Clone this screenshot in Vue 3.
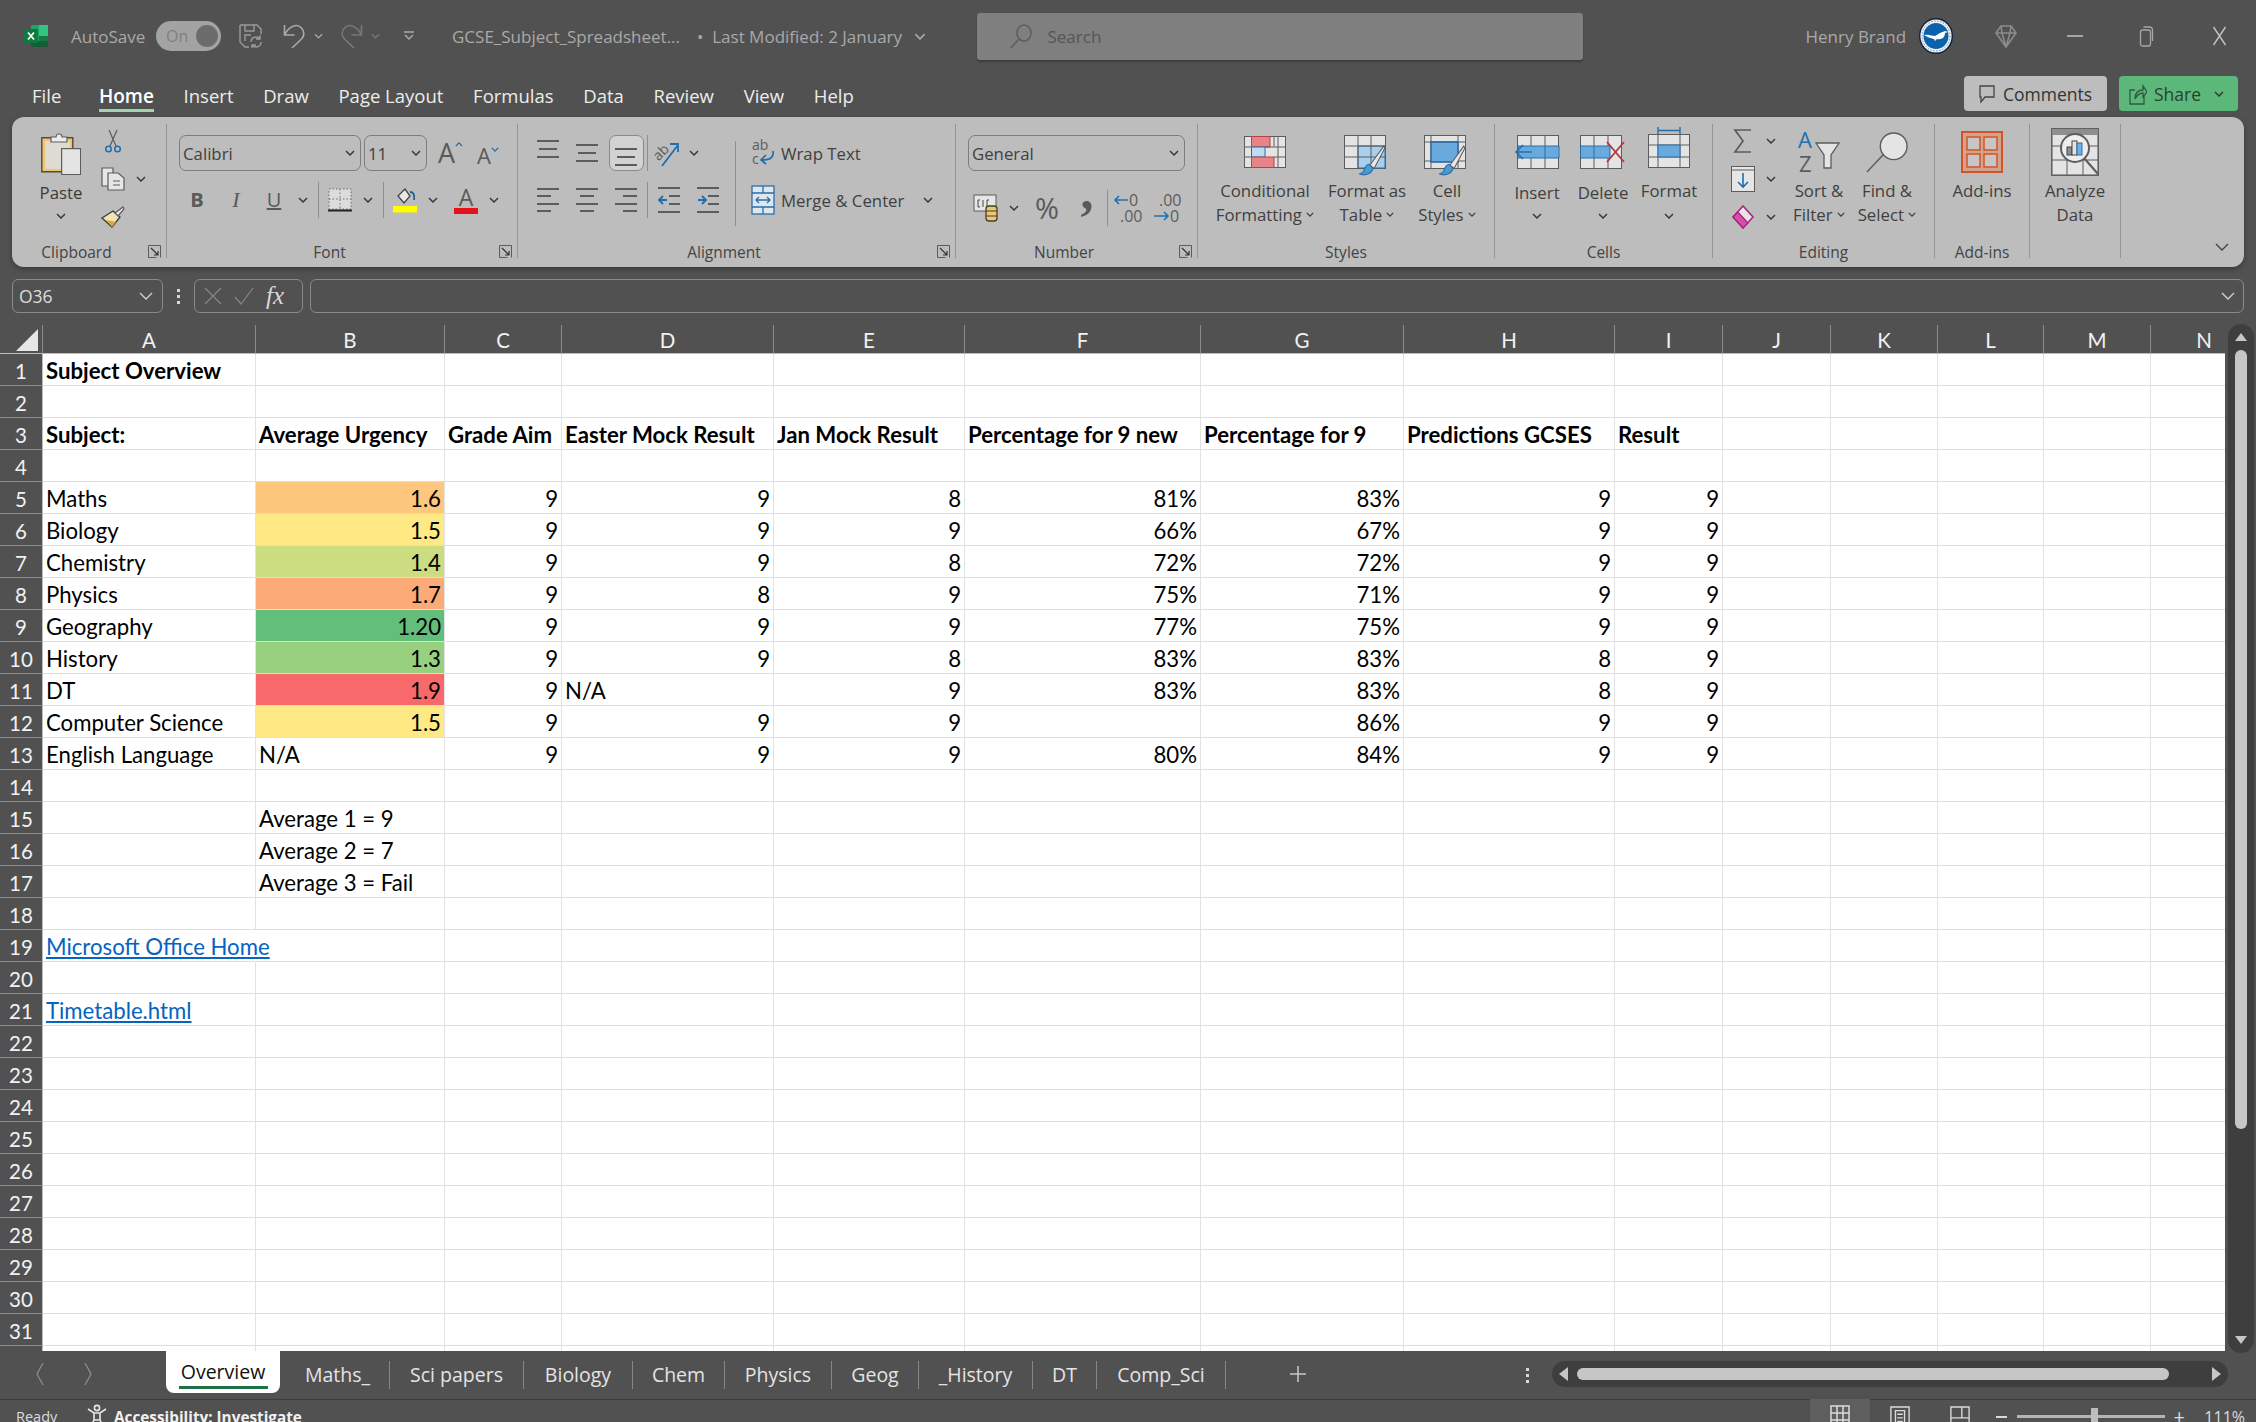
<script setup>
import { computed } from 'vue'

const columns = ['A', 'B', 'C', 'D', 'E', 'F', 'G', 'H', 'I', 'J', 'K', 'L', 'M', 'N']
const menuItems = ['File', 'Home', 'Insert', 'Draw', 'Page Layout', 'Formulas', 'Data', 'Review', 'View', 'Help']
const sheetTabs = ['Maths_', 'Sci papers', 'Biology', 'Chem', 'Physics', 'Geog', '_History', 'DT', 'Comp_Sci']

// colour scale values from the Average Urgency column
const urgencyColors = {
  '1.6': '#fdc77d',
  '1.5': '#ffe984',
  '1.4': '#cbdc81',
  '1.7': '#fcaa78',
  '1.20': '#63be7b',
  '1.3': '#98d07f',
  '1.9': '#f8696b',
}

const content = {
  1: ['Subject Overview'],
  3: ['Subject:', 'Average Urgency', 'Grade Aim', 'Easter Mock Result', 'Jan Mock Result', 'Percentage for 9 new', 'Percentage for 9', 'Predictions GCSES', 'Result'],
  5: ['Maths', '1.6', '9', '9', '8', '81%', '83%', '9', '9'],
  6: ['Biology', '1.5', '9', '9', '9', '66%', '67%', '9', '9'],
  7: ['Chemistry', '1.4', '9', '9', '8', '72%', '72%', '9', '9'],
  8: ['Physics', '1.7', '9', '8', '9', '75%', '71%', '9', '9'],
  9: ['Geography', '1.20', '9', '9', '9', '77%', '75%', '9', '9'],
  10: ['History', '1.3', '9', '9', '8', '83%', '83%', '8', '9'],
  11: ['DT', '1.9', '9', 'N/A', '9', '83%', '83%', '8', '9'],
  12: ['Computer Science', '1.5', '9', '9', '9', '', '86%', '9', '9'],
  13: ['English Language', 'N/A', '9', '9', '9', '80%', '84%', '9', '9'],
  15: ['', 'Average 1 = 9'],
  16: ['', 'Average 2 = 7'],
  17: ['', 'Average 3 = Fail'],
  19: ['Microsoft Office Home'],
  21: ['Timetable.html'],
}

const boldRows = [1, 3]
const linkRows = [19, 21]

const cells = computed(() => {
  const list = [{ key: 'corner', cls: 'head corner', text: '' }]
  columns.forEach((c) => list.push({ key: c, cls: 'head col-head', text: c }))
  for (let r = 1; r <= 32; r++) {
    list.push({ key: 'r' + r, cls: 'head row-head', text: String(r) })
    const values = content[r] || []
    columns.forEach((c, i) => {
      const text = values[i] || ''
      const isNum = /^[\d.]+%?$/.test(text)
      const cls = ['cell']
      if (isNum) cls.push('num')
      if (boldRows.includes(r)) cls.push('bold')
      if (linkRows.includes(r)) cls.push('link')
      if (r === 19 && i === 0) cls.push('spill')
      list.push({
        key: c + r,
        cls: cls.join(' '),
        text,
        bg: i === 1 ? urgencyColors[text] : null,
      })
    })
  }
  return list
})
</script>

<template>
  <div class="app">
    <svg class="defs" width="0" height="0">
      <symbol id="chev" viewBox="0 0 10 6"><path d="M1 1l4 4 4-4" fill="none" stroke="currentColor" stroke-width="1.5" /></symbol>
      <symbol id="launch" viewBox="0 0 13 13">
        <path d="M.5 .5h12v12M.5 .5v12h8" fill="none" stroke="#5c5c5c" />
        <path d="M3 3l7 7M10 6v4H6" fill="none" stroke="#333" stroke-width="1.2" />
      </symbol>
      <symbol id="brush" viewBox="0 0 26 30">
        <path d="M24 1L11 19l4 3L25 3z" fill="#e8e8e8" stroke="#5c5c5c" />
        <path d="M10 18c-4 1-4 5-5 7-1 1-3 2-4 2 4 2 11 1 13-5z" fill="#4a9bd4" stroke="#2a6ea8" />
      </symbol>
    </svg>

    <!-- title bar -->
    <header class="titlebar">
      <svg class="logo" viewBox="0 0 24 24">
        <rect x="7" y="1" width="17" height="22" rx="1.5" fill="#21a366" />
        <rect x="15" y="1" width="9" height="11" fill="#33c481" />
        <rect x="15" y="12" width="9" height="11" fill="#107c41" />
        <rect x="7" y="17" width="17" height="6" fill="#185c37" />
        <rect y="5" width="14" height="14" rx="1.5" fill="#0d7a3e" />
        <path d="M4 8.5l6 7M10 8.5l-6 7" stroke="#fff" stroke-width="1.7" />
      </svg>
      <span class="autosave">AutoSave</span>
      <span class="toggle"><span>On</span><i></i></span>
      <svg class="ti save" viewBox="0 0 23 24" fill="none" stroke="#9a9a9a" stroke-width="1.4">
        <path d="M1 1h17l4 4v5M1 1v17l5 5h4M6 1v6h9V1M6 17v-6h6" />
        <path d="M12 18a5 5 0 0 1 9-3M22 18a5 5 0 0 1-9 3M21 11v4h-4M13 25v-4h4" />
      </svg>
      <svg class="ti undo" viewBox="0 0 22 24" fill="none" stroke="#a9a9a9" stroke-width="1.6">
        <path d="M1.5 1v10h10M1.5 11C6 2 14-1 18.5 4c3.5 4 2.5 8 0 11L9 24" />
      </svg>
      <svg class="ti-chev c1"><use href="#chev" /></svg>
      <svg class="ti redo" viewBox="0 0 22 24" fill="none" stroke="#777" stroke-width="1.6">
        <path d="M20.5 1v10h-10M20.5 11C16 2 8-1 3.5 4c-3.5 4-2.5 8 0 11L13 24" />
      </svg>
      <svg class="ti-chev c2"><use href="#chev" /></svg>
      <svg class="ti qat" viewBox="0 0 10 10" fill="none" stroke="#a9a9a9" stroke-width="1.5">
        <path d="M0 1h10M1 4l4 4 4-4" />
      </svg>
      <span class="filename">GCSE_Subject_Spreadsheet...</span>
      <span class="modified">•&nbsp; Last Modified: 2 January</span>
      <svg class="ti-chev c3"><use href="#chev" /></svg>
      <div class="search">
        <svg class="search-icon" viewBox="0 0 24 24" fill="none" stroke="#5e5e5e" stroke-width="1.6">
          <ellipse cx="15" cy="9" rx="7" ry="8" />
          <path d="M10 15L2 24" />
        </svg>
        <span>Search</span>
      </div>
      <span class="user">Henry Brand</span>
      <svg class="avatar" viewBox="0 0 34 36">
        <ellipse cx="17" cy="18" rx="17" ry="18" fill="#0d2440" />
        <ellipse cx="17" cy="18" rx="15.6" ry="16.6" fill="#f4f4f4" />
        <ellipse cx="17" cy="18" rx="14" ry="15" fill="none" stroke="#5a86b5" stroke-dasharray="1.5 1.5" />
        <ellipse cx="17" cy="18" rx="12.5" ry="13" fill="#0a62ad" />
        <path d="M5 17c5-1 8 1 11 1l5-3 5-2 3 1-3 1c0 4-3 7-8 6l-2 2-1-2c-4-1-7-2-10-4z" fill="#fff" />
      </svg>
      <svg class="ti diamond" viewBox="0 0 22 23" fill="none" stroke="#8c8c8c" stroke-width="1.6">
        <path d="M6 1h10l5 7-10 14L1 8zM1 8h20M7 8l4 14 4-14M6 1l1 7M16 1l-1 7" />
      </svg>
      <span class="win-min"></span>
      <svg class="ti win-restore" viewBox="0 0 14 22" fill="none" stroke="#a6a6a6" stroke-width="1.3">
        <rect x="1" y="5" width="10" height="16" rx="2" /><path d="M4 2h6a3 3 0 0 1 3 3v11" />
      </svg>
      <svg class="ti win-close" viewBox="0 0 14 22" fill="none" stroke="#c2c2c2" stroke-width="1.4">
        <path d="M1 2l12 18M13 2L1 20" />
      </svg>
    </header>

    <!-- menu row -->
    <nav class="menubar">
      <span v-for="m in menuItems" :key="m" :class="['menu-item', { active: m === 'Home' }]">{{ m }}</span>
      <button class="comments">
        <svg viewBox="0 0 16 20" fill="none" stroke="#444" stroke-width="1.3"><path d="M1 2h14v11H6l-4 5V13H1z" /></svg>
        Comments
      </button>
      <button class="share">
        <svg viewBox="0 0 18 22" fill="none" stroke="#2f5a3c" stroke-width="1.3"><path d="M6 7H1v14h14V12M6 16c0-6 3-9 8-9V3l4 6-4 5v-4c-4 0-6 2-8 6z" /></svg>
        Share
        <svg class="share-chev"><use href="#chev" /></svg>
      </button>
    </nav>

    <!-- ribbon -->
    <section class="ribbon">
      <div class="group g-clip">
        <div class="body">
          <div class="paste">
            <svg class="paste-icon" viewBox="0 0 40 45">
              <path d="M.8 7.8h31v34H.8z" fill="#ecc671" stroke="#55493a" stroke-width="1.4" />
              <path d="M4 11h25v28H4z" fill="#dedbd2" />
              <path d="M10 12V7h5a3 3 0 0 1 6 0h5v5z" fill="#ececec" stroke="#5c5c5c" stroke-width="1.2" />
              <rect x="20.6" y="18.6" width="19" height="26" fill="#e4e4e4" stroke="#5c5c5c" stroke-width="1.2" />
            </svg>
            <span class="paste-label">Paste</span>
            <svg class="chev"><use href="#chev" /></svg>
          </div>
          <div class="small-col clip-col">
            <div class="small-row">
              <svg class="scissors" viewBox="0 0 16 24" fill="none">
                <path d="M5 17L12 1M11 17L4 1" stroke="#5c5c5c" stroke-width="1.2" />
                <circle cx="3.5" cy="20" r="2.8" stroke="#1f6fb0" stroke-width="1.5" />
                <circle cx="12.5" cy="20" r="2.8" stroke="#1f6fb0" stroke-width="1.5" />
              </svg>
            </div>
            <div class="small-row">
              <svg class="copy" viewBox="0 0 24 24" fill="#e6e6e6" stroke="#5c5c5c" stroke-width="1.2">
                <path d="M1 1h11v18H1z" />
                <path d="M7 6h10l6 5v12H7z" />
                <path d="M12 14h7M12 18h7" />
              </svg>
              <svg class="chev copy-chev"><use href="#chev" /></svg>
            </div>
            <div class="small-row">
              <svg class="format-painter" viewBox="0 0 24 22">
                <path d="M1 12L12 5l7 6-8 10z" fill="#f3e3b6" stroke="#3a3a3a" stroke-width="1.3" />
                <path d="M5 14l10 2-4 5z" fill="#d9a441" />
                <path d="M14 7l8-6 1 2-6 7z" fill="#e6e6e6" stroke="#5c5c5c" stroke-width="1.2" />
              </svg>
            </div>
          </div>
        </div>
        <div class="label"><span>Clipboard</span><svg class="launch"><use href="#launch" /></svg></div>
      </div>

      <div class="group g-font">
        <div class="body rows font-rows">
          <div class="row font-row1">
            <div class="combo font-combo"><span>Calibri</span><svg class="chev"><use href="#chev" /></svg></div>
            <div class="combo size-combo"><span>11</span><svg class="chev"><use href="#chev" /></svg></div>
            <span class="a-big">A<svg viewBox="0 0 10 6"><path d="M1 5l4-4 4 4" fill="none" stroke="#1f6fb0" stroke-width="1.6" /></svg></span>
            <span class="a-small">A<svg viewBox="0 0 10 6"><path d="M1 1l4 4 4-4" fill="none" stroke="#1f6fb0" stroke-width="1.6" /></svg></span>
          </div>
          <div class="row tool-grid font-row2">
            <b class="fmt fmt-b">B</b>
            <i class="fmt fmt-i">I</i>
            <u class="fmt fmt-u">U</u>
            <svg class="chev"><use href="#chev" /></svg>
            <span class="vsep"></span>
            <svg class="borders" viewBox="0 0 24 24" fill="none">
              <rect x="1" y="1" width="22" height="20" fill="#dcdcdc" />
              <path d="M1 1h22v20H1zM12 1v20M1 11h22" stroke="#6e6e6e" stroke-dasharray="1.5 2" />
              <path d="M0 22.5h24" stroke="#222" stroke-width="2" />
            </svg>
            <svg class="chev"><use href="#chev" /></svg>
            <span class="vsep"></span>
            <svg class="fill-color" viewBox="0 0 24 26">
              <path d="M5 9l7-7 5 7-6 7z" fill="#e8e8e8" stroke="#444" stroke-width="1.3" />
              <path d="M17 5c3 0 5 2 4 8" fill="none" stroke="#1f5f94" stroke-width="1.8" />
              <rect y="19" width="24" height="6.5" fill="#ffff00" />
            </svg>
            <svg class="chev"><use href="#chev" /></svg>
            <span class="font-color"><span>A</span><i></i></span>
            <svg class="chev"><use href="#chev" /></svg>
          </div>
        </div>
        <div class="label"><span>Font</span><svg class="launch"><use href="#launch" /></svg></div>
      </div>

      <div class="group g-align">
        <div class="body align-body">
          <div class="rows">
            <div class="row tool-grid align-row1">
              <svg class="al" viewBox="0 0 24 28" stroke="#5c5c5c" stroke-width="2"><path d="M1 2h22M3 10h18M1 18h22" /></svg>
              <svg class="al" viewBox="0 0 24 28" stroke="#5c5c5c" stroke-width="2"><path d="M1 6h22M3 14h18M1 22h22" /></svg>
              <span class="al-active"><svg class="al" viewBox="0 0 24 28" stroke="#5c5c5c" stroke-width="2"><path d="M1 10h22M3 18h18M1 26h22" /></svg></span>
              <span class="vsep"></span>
              <svg class="orient" viewBox="0 0 30 28" fill="none">
                <text x="1" y="19" font-size="14" fill="#5c5c5c" font-family="Open Sans" transform="rotate(-45 8 14)">ab</text>
                <path d="M10 27L26 6M18 5h8v8" stroke="#1f6fb0" stroke-width="1.8" />
              </svg>
              <svg class="chev"><use href="#chev" /></svg>
            </div>
            <div class="row tool-grid align-row2">
              <svg class="al" viewBox="0 0 24 28" stroke="#5c5c5c" stroke-width="2"><path d="M1 3h22M1 10h14M1 18h22M1 25h14" /></svg>
              <svg class="al" viewBox="0 0 24 28" stroke="#5c5c5c" stroke-width="2"><path d="M1 3h22M5 10h14M1 18h22M5 25h14" /></svg>
              <svg class="al" viewBox="0 0 24 28" stroke="#5c5c5c" stroke-width="2"><path d="M1 3h22M9 10h14M1 18h22M9 25h14" /></svg>
              <span class="vsep"></span>
              <svg class="al" viewBox="0 0 24 28" fill="none"><path d="M1 2h22M12 10h11M12 18h11M1 26h22" stroke="#5c5c5c" stroke-width="2" /><path d="M10 14H2M6 10l-4 4 4 4" stroke="#1f6fb0" stroke-width="1.8" /></svg>
              <svg class="al" viewBox="0 0 24 28" fill="none"><path d="M1 2h22M12 10h11M12 18h11M1 26h22" stroke="#5c5c5c" stroke-width="2" /><path d="M2 14h8M6 10l4 4-4 4" stroke="#1f6fb0" stroke-width="1.8" /></svg>
            </div>
          </div>
          <span class="vsep tall"></span>
          <div class="rows wrap-block">
            <div class="row wrap-row">
              <svg class="wrap-icon" viewBox="0 0 24 30" fill="none">
                <text x="1" y="12" font-size="14" fill="#5c5c5c" font-family="Open Sans">ab</text>
                <text x="1" y="26" font-size="14" fill="#5c5c5c" font-family="Open Sans">c</text>
                <path d="M22 13c1 6-2 9-11 9M15 17l-5 5 5 4" stroke="#1f6fb0" stroke-width="1.7" />
              </svg>
              <span class="wrap-text">Wrap Text</span>
            </div>
            <div class="row wrap-row">
              <svg class="wrap-icon" viewBox="0 0 24 30" fill="#dfe7ee" stroke="#2a6ea8" stroke-width="1.3">
                <rect x="1" y="1" width="22" height="28" />
                <path d="M1 8h22M1 22h22M12 1v7M12 22v7" />
                <path d="M5 15h14M8 12l-3 3 3 3M16 12l3 3-3 3" fill="none" />
              </svg>
              <span class="wrap-text merge">Merge &amp; Center</span>
              <svg class="chev"><use href="#chev" /></svg>
            </div>
          </div>
        </div>
        <div class="label"><span>Alignment</span><svg class="launch"><use href="#launch" /></svg></div>
      </div>

      <div class="group g-number">
        <div class="body rows number-rows">
          <div class="row">
            <div class="combo number-combo"><span>General</span><svg class="chev"><use href="#chev" /></svg></div>
          </div>
          <div class="row tool-grid number-row2">
            <svg class="account" viewBox="0 0 26 28" fill="none">
              <rect x="1" y="1" width="22" height="16" fill="#e6e6e6" stroke="#5c5c5c" />
              <path d="M7 6H5v7h2M10 6v7M16 6h-2v7h2" stroke="#444" />
              <rect x="13" y="12" width="11" height="15" rx="3" fill="#e8c879" stroke="#4d3d1c" stroke-width="1.3" />
              <path d="M13 17h11M13 22h11" stroke="#4d3d1c" />
            </svg>
            <svg class="chev"><use href="#chev" /></svg>
            <span class="percent">%</span>
            <span class="comma">,</span>
            <span class="vsep"></span>
            <svg class="dec" viewBox="0 0 30 30">
              <text x="16" y="13" font-size="16" fill="#5c5c5c" font-family="Open Sans">0</text>
              <text x="7" y="29" font-size="16" fill="#5c5c5c" font-family="Open Sans">.00</text>
              <path d="M15 7H2M6 3L2 7l4 4" fill="none" stroke="#1f6fb0" stroke-width="1.6" />
            </svg>
            <svg class="dec" viewBox="0 0 30 30">
              <text x="7" y="13" font-size="16" fill="#5c5c5c" font-family="Open Sans">.00</text>
              <text x="18" y="29" font-size="16" fill="#5c5c5c" font-family="Open Sans">0</text>
              <path d="M2 23h14M12 19l4 4-4 4" fill="none" stroke="#1f6fb0" stroke-width="1.6" />
            </svg>
          </div>
        </div>
        <div class="label"><span>Number</span><svg class="launch"><use href="#launch" /></svg></div>
      </div>

      <div class="group g-styles">
        <div class="body">
          <div class="big w134">
            <div class="big-icon">
              <svg class="ic42 short" viewBox="0 0 42 32">
                <rect x=".5" y=".5" width="41" height="31" fill="#e4e4e4" stroke="#5c5c5c" />
                <path d="M7.5 .5H26v10.5H7.5z" fill="#e88387" stroke="#b9434a" />
                <path d="M7.5 11H21v10H7.5z" fill="#bcdcf2" stroke="#2a6ea8" />
                <path d="M7.5 21H30v10.5H7.5z" fill="#e88387" stroke="#b9434a" />
                <path d="M34 .5v31M30 .5v10M.5 11h7M.5 21h7M30 21h11.5M21 11h20.5" stroke="#5c5c5c" fill="none" />
              </svg>
            </div>
            <span>Conditional</span>
            <span>Formatting <svg class="chev inline"><use href="#chev" /></svg></span>
          </div>
          <div class="big w70">
            <div class="big-icon">
              <svg class="ic46 shift" viewBox="0 0 46 42">
                <rect x=".5" y=".5" width="41" height="33" fill="#e4e4e4" stroke="#5c5c5c" />
                <path d="M14 11h27v22H14z" fill="#a8d0ee" stroke="#2a6ea8" />
                <path d="M14 .5v33M27 .5v33M.5 11h41M.5 22h41" stroke="#5c5c5c" fill="none" />
                <use href="#brush" x="12" y="10" width="32" height="32" />
              </svg>
            </div>
            <span>Format as</span>
            <span>Table <svg class="chev inline"><use href="#chev" /></svg></span>
          </div>
          <div class="big w90">
            <div class="big-icon">
              <svg class="ic46 shift" viewBox="0 0 46 42">
                <rect x=".5" y=".5" width="41" height="33" fill="#e4e4e4" stroke="#5c5c5c" />
                <path d="M.5 7h41M.5 26h41M7 .5v33M34 .5v33" stroke="#5c5c5c" fill="none" />
                <path d="M7 7h27v20H7z" fill="#68a9de" stroke="#2a5f9c" stroke-width="1.3" />
                <use href="#brush" x="12" y="10" width="32" height="32" />
              </svg>
            </div>
            <span>Cell</span>
            <span>Styles <svg class="chev inline"><use href="#chev" /></svg></span>
          </div>
        </div>
        <div class="label center"><span>Styles</span></div>
      </div>

      <div class="group g-cells">
        <div class="body cells-body">
          <div class="big w66">
            <div class="big-icon">
              <svg class="ic46 short" viewBox="0 0 46 34">
                <rect x="3.5" y=".5" width="41" height="33" fill="#e4e4e4" stroke="#5c5c5c" />
                <path d="M17 .5v33M31 .5v33" stroke="#5c5c5c" />
                <path d="M4 11h41v12H4z" fill="#68a9de" stroke="#2a6ea8" />
                <path d="M31 11v12" stroke="#2a6ea8" />
                <path d="M18 17H2M9 10l-7 7 7 7" fill="none" stroke="#2a6ea8" stroke-width="1.6" />
              </svg>
            </div>
            <span class="low">Insert</span>
            <svg class="chev under"><use href="#chev" /></svg>
          </div>
          <div class="big w66">
            <div class="big-icon">
              <svg class="ic46 short" viewBox="0 0 46 34">
                <rect x=".5" y=".5" width="41" height="33" fill="#e4e4e4" stroke="#5c5c5c" />
                <path d="M14 .5v33M28 .5v33" stroke="#5c5c5c" />
                <path d="M.5 11H30v12H.5z" fill="#68a9de" stroke="#2a6ea8" />
                <path d="M14 11v12" stroke="#2a6ea8" />
                <path d="M27 7l17 20M44 7L27 27" stroke="#b0393f" stroke-width="1.8" />
              </svg>
            </div>
            <span class="low">Delete</span>
            <svg class="chev under"><use href="#chev" /></svg>
          </div>
          <div class="big w66">
            <div class="big-icon">
              <svg class="ic42t" viewBox="0 0 42 42">
                <path d="M10 1v7M32 1v7M10 4.5h22" stroke="#2a6ea8" stroke-width="1.4" fill="none" />
                <rect x=".5" y="8.5" width="41" height="33" fill="#e4e4e4" stroke="#5c5c5c" />
                <path d="M10 8.5v33M32 8.5v33M.5 19h41M.5 31h41" stroke="#5c5c5c" />
                <path d="M10 19h22v12H10z" fill="#68a9de" stroke="#2a6ea8" />
              </svg>
            </div>
            <span>Format</span>
            <svg class="chev under up"><use href="#chev" /></svg>
          </div>
        </div>
        <div class="label center"><span>Cells</span></div>
      </div>

      <div class="group g-edit">
        <div class="body">
          <div class="small-col edit-col">
            <div class="small-row">
              <svg class="sigma" viewBox="0 0 20 26" fill="none" stroke="#5c5c5c" stroke-width="1.7"><path d="M18 2H2l8 11-8 11h16" /></svg>
              <svg class="chev"><use href="#chev" /></svg>
            </div>
            <div class="small-row">
              <svg class="fill-down" viewBox="0 0 24 26">
                <rect x=".5" y=".5" width="23" height="25" fill="#e6e6e6" stroke="#5c5c5c" />
                <path d="M.5 4h23" stroke="#5c5c5c" />
                <path d="M12 7v14M7 16l5 5 5-5" fill="none" stroke="#1f6fb0" stroke-width="1.6" />
              </svg>
              <svg class="chev"><use href="#chev" /></svg>
            </div>
            <div class="small-row">
              <svg class="eraser" viewBox="0 0 22 24">
                <path d="M11 1l10 11-10 11L1 12z" fill="#e6e6e6" stroke="#a81f7c" stroke-width="1.5" />
                <path d="M1 12l5-5 10 11-5 5z" fill="#d64fa8" stroke="#a81f7c" stroke-width="1.2" />
              </svg>
              <svg class="chev"><use href="#chev" /></svg>
            </div>
          </div>
          <div class="big w76">
            <div class="big-icon">
              <svg class="ic42" viewBox="0 0 42 42">
                <text x="0" y="17" font-size="22" fill="#1f6fb0" font-family="Open Sans">A</text>
                <text x="1" y="41" font-size="22" fill="#5c5c5c" font-family="Open Sans">Z</text>
                <path d="M18 12h23l-8 12v13h-7V24z" fill="#e4e4e4" stroke="#5c5c5c" stroke-width="1.3" />
              </svg>
            </div>
            <span>Sort &amp;</span>
            <span>Filter <svg class="chev inline"><use href="#chev" /></svg></span>
          </div>
          <div class="big w60">
            <div class="big-icon">
              <svg class="ic42" viewBox="0 0 44 42">
                <circle cx="29" cy="15" r="14" fill="#e4e4e4" stroke="#5c5c5c" stroke-width="1.5" />
                <path d="M18 24L1 42" stroke="#5c5c5c" stroke-width="1.5" />
              </svg>
            </div>
            <span>Find &amp;</span>
            <span>Select <svg class="chev inline"><use href="#chev" /></svg></span>
          </div>
        </div>
        <div class="label center"><span>Editing</span></div>
      </div>

      <div class="group g-addins">
        <div class="body center-body">
          <div class="big">
            <div class="big-icon">
              <svg class="ic42" viewBox="0 0 42 42">
                <rect x="1" y="1" width="40" height="40" fill="#d3a48d" stroke="#d2532a" stroke-width="2" />
                <path d="M6 6h13v13H6zM23 6h13v13H23zM6 23h13v13H6zM23 23h13v13H23z" fill="#c8c5c2" stroke="#d2532a" stroke-width="1.5" />
              </svg>
            </div>
            <span>Add-ins</span>
          </div>
        </div>
        <div class="label center"><span>Add-ins</span></div>
      </div>

      <div class="group g-analyze">
        <div class="body center-body">
          <div class="big">
            <div class="big-icon">
              <svg class="ic48" viewBox="0 0 48 48">
                <rect x=".8" y=".8" width="46.4" height="46.4" fill="#e4e4e4" stroke="#5c5c5c" stroke-width="1.5" />
                <rect x="1" y="1" width="46" height="6" fill="#8e8e8e" />
                <path d="M1 18h46M1 32h46M16 32v15M32 32v15" stroke="#5c5c5c" />
                <circle cx="24" cy="20" r="14" fill="#eee" stroke="#5c5c5c" stroke-width="2" />
                <rect x="16" y="19" width="5" height="8" fill="#8e8e8e" stroke="#444" />
                <rect x="21" y="13" width="5" height="14" fill="#e4e4e4" stroke="#444" />
                <rect x="26" y="15" width="5" height="12" fill="#6fb1e6" stroke="#2a6ea8" />
                <path d="M33 30l14 16" stroke="#5c5c5c" stroke-width="2" />
              </svg>
            </div>
            <span>Analyze</span>
            <span>Data</span>
          </div>
        </div>
      </div>

      <div class="collapse">
        <svg viewBox="0 0 14 8"><path d="M1 1l6 6 6-6" fill="none" stroke="#444" stroke-width="1.4" /></svg>
      </div>
    </section>

    <!-- formula bar -->
    <div class="formula-bar">
      <div class="name-box"><span>O36</span><svg viewBox="0 0 14 8"><path d="M1 1l6 6 6-6" fill="none" stroke="#cfcfcf" stroke-width="1.4" /></svg></div>
      <span class="fb-dots"><i></i><i></i><i></i></span>
      <div class="fx-box">
        <svg viewBox="0 0 18 18" fill="none" stroke="#858585" stroke-width="1.2"><path d="M1 1l16 16M17 1L1 17" /></svg>
        <svg viewBox="0 0 20 18" fill="none" stroke="#858585" stroke-width="1.2"><path d="M1 10l6 7L19 1" /></svg>
        <span>fx</span>
      </div>
      <div class="formula-input">
        <svg viewBox="0 0 14 8"><path d="M1 1l6 6 6-6" fill="none" stroke="#cfcfcf" stroke-width="1.4" /></svg>
      </div>
    </div>

    <!-- sheet -->
    <div class="sheet-area">
      <div class="sheet-grid">
        <div v-for="c in cells" :key="c.key" :class="c.cls" :style="c.bg ? { background: c.bg } : null">{{ c.text }}</div>
      </div>
      <div class="vscroll">
        <svg viewBox="0 0 14 9"><path d="M7 1l6 8H1z" fill="#c6c6c6" /></svg>
        <div class="vthumb"></div>
        <svg class="vdown" viewBox="0 0 14 9"><path d="M7 8l6-8H1z" fill="#c6c6c6" /></svg>
      </div>
    </div>

    <!-- sheet tabs -->
    <div class="sheet-bar">
      <div class="sheet-nav">
        <svg viewBox="0 0 8 24" fill="none" stroke="#8f8f8f" stroke-width="1.2"><path d="M7 1L1 12l6 11" /></svg>
        <svg viewBox="0 0 8 24" fill="none" stroke="#8f8f8f" stroke-width="1.2"><path d="M1 1l6 11L1 23" /></svg>
      </div>
      <div class="tabs">
        <div class="tab-active"><span>Overview</span></div>
        <span></span>
        <div v-for="t in sheetTabs" :key="t" class="tab">{{ t }}</div>
      </div>
      <svg class="plus" viewBox="0 0 16 16" stroke="#c9c9c9" stroke-width="1.5"><path d="M8 0v16M0 8h16" /></svg>
      <span class="more-dots"><i></i><i></i><i></i></span>
      <div class="hscroll">
        <svg viewBox="0 0 9 14"><path d="M0 7l9-7v14z" fill="#c6c6c6" /></svg>
        <div class="hthumb"></div>
        <svg viewBox="0 0 9 14"><path d="M9 7L0 0v14z" fill="#c6c6c6" /></svg>
      </div>
    </div>

    <!-- status bar -->
    <footer class="status-bar">
      <span class="ready">Ready</span>
      <svg class="a11y" viewBox="0 0 22 26" fill="none" stroke="#e6e6e6" stroke-width="1.6">
        <circle cx="11" cy="4" r="2.6" />
        <path d="M2 5l6 4h6l6-4M8 9v7l-4 8M14 9v7l4 8M8 16h6" />
      </svg>
      <span class="a11y-text">Accessibility: Investigate</span>
      <div class="status-right">
        <span class="view-btn active">
          <svg viewBox="0 0 20 24" fill="none" stroke="#dcdcdc" stroke-width="1.5"><path d="M1 1h18v22H1zM1 8h18M1 15h18M7 1v22M13 1v22" /></svg>
        </span>
        <span class="view-btn">
          <svg viewBox="0 0 22 24" fill="none" stroke="#dcdcdc" stroke-width="1.5"><path d="M1 1h20v22H1zM6 5h10v18H6zM8 9h6M8 13h6M8 17h6" /></svg>
        </span>
        <span class="view-btn">
          <svg viewBox="0 0 22 24" fill="none" stroke="#dcdcdc" stroke-width="1.5"><path d="M1 1h20v22H1zM1 13h12V1M13 13h8" /></svg>
        </span>
        <span class="zoom-minus"></span>
        <div class="zoom-track"><i></i></div>
        <span class="zoom-plus">+</span>
        <span class="zoom-value">111%</span>
      </div>
    </footer>
  </div>
</template>

<style>
html,
body {
  margin: 0;
  background: #515151;
  overflow: hidden;
}
</style>

<style scoped>
.app {
  width: 2256px;
  height: 1422px;
  overflow: hidden;
  display: flex;
  flex-direction: column;
  background: #515151;
  font-family: 'Open Sans', sans-serif;
  color: #3a3a3a;
}

.defs {
  position: absolute;
}

/* title bar */
.titlebar {
  height: 72px;
  flex: none;
  display: flex;
  align-items: center;
  padding-left: 24px;
  color: #a9a9a9;
  font-size: 17px;
}

.logo {
  width: 24px;
  height: 24px;
  flex: none;
}

.autosave {
  width: 85px;
  margin-left: 23px;
  flex: none;
}

.toggle {
  width: 65px;
  height: 30px;
  flex: none;
  box-sizing: border-box;
  border-radius: 15px;
  background: #a3a3a3;
  display: flex;
  align-items: center;
  justify-content: space-between;
  padding: 0 3px 0 10px;
  color: #808080;
  font-size: 16px;
}

.toggle i {
  width: 22px;
  height: 22px;
  border-radius: 50%;
  background: #6c6c6c;
}

.ti,
.ti-chev {
  flex: none;
}

.ti {
  height: 24px;
}

.ti-chev {
  width: 9px;
  height: 6px;
  color: #a6a6a6;
}

.save {
  width: 23px;
  margin-left: 18px;
}

.undo {
  width: 22px;
  margin-left: 21px;
}

.c1 {
  margin-left: 9px;
}

.redo {
  width: 22px;
  margin-left: 18px;
}

.c2 {
  margin-left: 8px;
  color: #787878;
}

.qat {
  width: 10px;
  height: 10px;
  margin-left: 24px;
}

.filename {
  width: 245px;
  margin-left: 38px;
  flex: none;
  white-space: nowrap;
}

.modified {
  width: 217px;
  flex: none;
  white-space: nowrap;
}

.c3 {
  width: 12px;
  height: 7px;
}

.search {
  width: 606px;
  height: 47px;
  margin-left: 50.5px;
  flex: none;
  border-radius: 3px;
  background: #7f7f7f;
  box-shadow: 0 2px 2px #3d3d3d;
  display: flex;
  align-items: center;
  gap: 15px;
  padding-left: 32px;
  box-sizing: border-box;
  color: #555;
}

.search-icon {
  width: 24px;
  height: 24px;
}

.user {
  width: 113px;
  margin-left: 223px;
  flex: none;
  white-space: nowrap;
}

.avatar {
  width: 34px;
  height: 36px;
  flex: none;
}

.diamond {
  width: 22px;
  height: 23px;
  margin-left: 42px;
}

.win-min {
  width: 16px;
  height: 2px;
  margin-left: 50px;
  flex: none;
  background: #a6a6a6;
}

.win-restore {
  width: 15px;
  height: 22px;
  margin-left: 56px;
}

.win-close {
  width: 15px;
  height: 22px;
  margin-left: 58px;
}

/* menu */
.menubar {
  height: 45px;
  flex: none;
  display: flex;
  align-items: flex-start;
  padding-left: 32px;
  box-sizing: border-box;
  font-size: 18.5px;
  color: #ececec;
  gap: 29.7px;
}

.menu-item {
  height: 32px;
  padding-top: 8px;
  line-height: 32px;
  white-space: nowrap;
}

.menu-item:first-child {
  margin-right: 8px;
}

.menu-item.active {
  color: #fff;
  font-weight: 600;
  font-size: 19px;
  border-bottom: 3px solid #9fd6b1;
  height: 29px;
}

.comments,
.share {
  height: 35px;
  margin-top: 4px;
  border: 0;
  border-radius: 4px;
  font: inherit;
  font-size: 17.5px;
  display: flex;
  align-items: center;
  padding: 0;
  flex: none;
}

.comments {
  width: 143px;
  margin-left: auto;
  background: #bdbdbd;
  color: #333;
  gap: 8px;
  justify-content: center;
}

.comments svg {
  width: 16px;
  height: 20px;
}

.share {
  width: 119px;
  margin-left: -17.7px;
  margin-right: 18px;
  background: #5cb87a;
  color: #2b3f31;
  padding-left: 10px;
  gap: 7px;
  box-sizing: border-box;
}

.share svg {
  width: 18px;
  height: 22px;
}

.share .share-chev {
  width: 10px;
  height: 6px;
  margin-left: 6px;
}

/* ribbon */
.ribbon {
  height: 150px;
  width: 2232px;
  flex: none;
  margin-left: 12px;
  box-sizing: border-box;
  padding-top: 7px;
  border-radius: 12px;
  background: #bdbdbd;
  box-shadow: 0 2px 4px #3a3a3a;
  display: flex;
  font-size: 16.8px;
}

.group {
  height: 134px;
  flex: none;
  display: flex;
  flex-direction: column;
  box-sizing: border-box;
  border-right: 1px solid #949494;
}

.body {
  flex: 1;
  display: flex;
  min-height: 0;
}

.body.rows {
  flex-direction: column;
}

.label {
  height: 20px;
  margin-bottom: -4px;
  line-height: 20px;
  display: flex;
  font-size: 15.5px;
  color: #444;
}

.label span {
  flex: 1;
  text-align: center;
}

.launch {
  width: 13px;
  height: 13px;
  margin: 3px 5px 0 7px;
  flex: none;
}

.g-clip { width: 155px; }
.g-font { width: 351px; }
.g-align { width: 438px; }
.g-number { width: 242px; }
.g-styles { width: 297px; }
.g-cells { width: 218px; }
.g-edit { width: 222px; }
.g-addins { width: 95px; }
.g-analyze { width: 91px; }

.chev {
  width: 10px;
  height: 6px;
  color: #3a3a3a;
  flex: none;
}

.chev.inline {
  vertical-align: 4px;
  width: 8px;
  height: 5px;
}

.paste {
  width: 48px;
  margin-left: 25px;
  display: flex;
  flex-direction: column;
  align-items: center;
  flex: none;
}

.paste-icon {
  width: 40px;
  height: 45px;
  margin-top: 6px;
  flex: none;
}

.paste-label {
  line-height: 24px;
  margin-top: 6px;
}

.paste .chev {
  margin-top: 8px;
}

.small-col {
  margin-top: -2px;
  flex: none;
}

.small-row {
  height: 38px;
  display: flex;
  align-items: center;
}

.clip-col {
  padding-left: 16px;
}

.scissors {
  width: 16px;
  height: 24px;
  margin-left: 4px;
}

.copy {
  width: 24px;
  height: 24px;
}

.copy-chev {
  margin-left: 11px;
}

.format-painter {
  width: 24px;
  height: 22px;
}

.rows {
  display: flex;
  flex-direction: column;
  gap: 11px;
  padding-top: 11px;
}

.row {
  height: 36px;
  display: flex;
  align-items: center;
}

.row.tool-grid {
  display: grid;
  justify-items: center;
  align-items: center;
}

.font-rows {
  padding-left: 12px;
}

.font-row2 {
  margin-left: -2px;
  grid-template-columns: 40px 38px 38px 20px 10px 34px 22px 8px 36px 20px 46px 10px;
}

.combo {
  height: 36px;
  box-sizing: border-box;
  border: 1px solid #7d7d7d;
  border-radius: 7px;
  display: flex;
  align-items: center;
  justify-content: space-between;
  padding: 0 5px 0 3px;
  color: #404040;
}

.font-combo { width: 182px; }

.size-combo {
  width: 63px;
  margin-left: 3px;
}

.a-big,
.a-small {
  display: flex;
  color: #5a5a5a;
  line-height: 1.1;
  flex: none;
}

.a-big {
  font-size: 27px;
  margin-left: 11px;
}

.a-small {
  font-size: 22px;
  margin-left: 14px;
  padding-top: 4px;
}

.a-big svg,
.a-small svg {
  width: 8px;
  height: 5px;
  margin-top: 4px;
}

.fmt {
  color: #5a5a5a;
  font-size: 20px;
  line-height: 1.2;
}

.fmt-i {
  font-family: 'Liberation Serif', serif;
  font-size: 22px;
}

.vsep {
  width: 1px;
  height: 36px;
  background: #8f8f8f;
}

.borders {
  width: 24px;
  height: 24px;
}

.fill-color {
  width: 24px;
  height: 26px;
}

.font-color {
  width: 24px;
  display: flex;
  flex-direction: column;
  align-items: center;
  color: #5a5a5a;
  font-size: 23px;
  line-height: 22px;
}

.font-color i {
  width: 24px;
  height: 6px;
  background: #e8111a;
}

.align-body {
  padding-left: 11px;
}

.align-row1 {
  grid-template-columns: 38px 40px 38px 4px 42px 6px;
}

.align-row2 {
  grid-template-columns: 38px 40px 38px 4px 40px 38px;
}

.al {
  width: 24px;
  height: 28px;
  display: block;
}

.al-active {
  width: 35px;
  height: 36px;
  box-sizing: border-box;
  border: 1px solid #8a8a8a;
  border-radius: 7px;
  background: #d2d2d2;
  display: flex;
  align-items: center;
  justify-content: center;
}

.orient {
  width: 30px;
  height: 28px;
  margin-right: 6px;
}

.vsep.tall {
  height: 85px;
  margin: 17px 0 0 8px;
  flex: none;
}

.wrap-block {
  padding-left: 15px;
}

.wrap-row {
  width: 190px;
}

.wrap-icon {
  width: 24px;
  height: 30px;
  flex: none;
}

.wrap-text {
  margin-left: 6px;
  white-space: nowrap;
  color: #404040;
}

.wrap-text.merge {
  width: 142px;
  flex: none;
}

.number-rows {
  padding-left: 12px;
}

.number-combo { width: 217px; }

.number-row2 {
  grid-template-columns: 36px 20px 46px 34px 6px 36px 42px;
}

.account {
  width: 26px;
  height: 28px;
}

.percent {
  font-size: 29px;
  color: #5a5a5a;
  line-height: 1.2;
}

.comma {
  font-family: 'Liberation Serif', serif;
  font-weight: 700;
  font-size: 52px;
  line-height: 52px;
  height: 52px;
  color: #5a5a5a;
  transform: translateY(-16px);
}

.dec {
  width: 30px;
  height: 30px;
}

.big {
  display: flex;
  flex-direction: column;
  align-items: center;
  line-height: 24px;
  white-space: nowrap;
  flex: none;
  color: #404040;
}

.big-icon {
  height: 55px;
  display: flex;
  align-items: center;
  justify-content: center;
  flex: none;
}

.w134 { width: 134px; }
.w70 { width: 70px; }
.w90 { width: 90px; }
.w66 { width: 66px; }
.w76 { width: 76px; }
.w60 { width: 60px; }

.ic42 { width: 42px; height: 42px; }
.ic42.short { height: 32px; }
.ic42t { width: 42px; height: 42px; margin-top: -10px; }
.ic46 { width: 46px; height: 42px; }
.ic46.short { height: 34px; }
.ic46.shift { margin-top: 8px; }
.ic48 { width: 48px; height: 48px; }

.cells-body {
  padding-left: 9px;
}

.low {
  margin-top: 2px;
}

.under {
  margin-top: 8px;
}

.under.up {
  margin-top: 10px;
}

.edit-col {
  padding-left: 12px;
  width: 56px;
}

.edit-col .small-row {
  display: grid;
  grid-template-columns: 36px 20px;
  justify-items: center;
}

.sigma { width: 20px; height: 26px; }
.fill-down { width: 24px; height: 26px; }
.eraser { width: 22px; height: 24px; }

.center-body {
  justify-content: center;
}

.collapse {
  flex: 1;
  display: flex;
  align-items: flex-end;
  justify-content: flex-end;
  height: 127px;
  padding-right: 15px;
}

.collapse svg {
  width: 14px;
  height: 8px;
}

/* formula bar */
.formula-bar {
  height: 34px;
  flex: none;
  margin: 12px 12px 0;
  display: flex;
  color: #dcdcdc;
}

.name-box,
.fx-box,
.formula-input {
  box-sizing: border-box;
  border: 1px solid #8a8a8a;
  border-radius: 6px;
  display: flex;
  align-items: center;
}

.name-box {
  width: 151px;
  justify-content: space-between;
  padding: 0 9px 0 6px;
  font-size: 17.5px;
}

.name-box svg,
.formula-input svg {
  width: 14px;
  height: 8px;
}

.fb-dots,
.more-dots {
  display: flex;
  flex-direction: column;
  justify-content: center;
  gap: 3px;
  flex: none;
}

.fb-dots {
  width: 31px;
  align-items: center;
}

.fb-dots i,
.more-dots i {
  width: 3px;
  height: 3px;
  background: #d8d8d8;
}

.fx-box {
  width: 109px;
  padding-left: 9px;
  gap: 12px;
}

.fx-box svg:nth-child(1) {
  width: 18px;
  height: 18px;
}

.fx-box svg:nth-child(2) {
  width: 20px;
  height: 18px;
}

.fx-box span {
  font-family: 'Liberation Serif', serif;
  font-style: italic;
  font-size: 25px;
  line-height: 30px;
  color: #d8d8d8;
}

.formula-input {
  flex: 1;
  margin-left: 7px;
  justify-content: flex-end;
  padding-right: 8px;
}

/* sheet */
.sheet-area {
  height: 1026px;
  flex: none;
  margin-top: 12px;
  display: flex;
}

.sheet-grid {
  width: 2225px;
  height: 1026px;
  flex: none;
  overflow: hidden;
  display: grid;
  grid-template-columns: 43px 213px 189px 117px 212px 191px 236px 203px 211px 108px 108px 107px 106px 107px 107px;
  grid-template-rows: 29px;
  grid-auto-rows: 32px;
  background: #fff;
  font-family: Lato, sans-serif;
  font-size: 22.2px;
  color: #000;
}

.head {
  background: #515151;
  color: #f2f2f2;
  display: flex;
  align-items: center;
  justify-content: center;
  box-sizing: border-box;
  font-size: 20.5px;
}

.col-head {
  border-right: 1px solid #8c8c8c;
  border-bottom: 1px solid #bdbdbd;
  padding-top: 2px;
}

.row-head {
  border-bottom: 1px solid #8c8c8c;
  border-right: 1px solid #bdbdbd;
  padding-top: 2px;
}

.corner {
  border-bottom: 1px solid #bdbdbd;
  border-right: 1px solid #8c8c8c;
}

.corner::after {
  content: '';
  width: 22px;
  height: 22px;
  margin-left: 12px;
  margin-top: 2px;
  background: #e6e6e6;
  clip-path: polygon(100% 0, 100% 100%, 0 100%);
}

.cell {
  box-sizing: border-box;
  height: 32px;
  border-right: 1px solid #e2e2e2;
  border-bottom: 1px solid #dedede;
  padding: 1px 3px 0;
  line-height: 31px;
  white-space: nowrap;
  min-width: 0;
}

.cell.num {
  text-align: right;
}

.cell.bold {
  font-weight: 700;
}

.cell.link {
  color: #0563c1;
  text-decoration: underline;
}

.cell.spill {
  border-right-color: transparent;
}

.vscroll {
  width: 26px;
  height: 1029px;
  flex: none;
  margin: -1px 0 0 3px;
  border-radius: 13px;
  background: #3e3e3e;
  display: flex;
  flex-direction: column;
  align-items: center;
  padding-top: 8px;
  box-sizing: border-box;
}

.vscroll svg {
  width: 14px;
  height: 9px;
  flex: none;
}

.vthumb {
  width: 12px;
  height: 779px;
  margin-top: 9px;
  border-radius: 6px;
  background: #c6c6c6;
}

.vscroll .vdown {
  margin-top: auto;
  margin-bottom: 8px;
}

/* sheet tabs */
.sheet-bar {
  height: 48px;
  flex: none;
  display: flex;
  align-items: flex-start;
  border-bottom: 1px solid #3c3c3c;
  font-size: 19.5px;
  color: #e4e4e4;
}

.sheet-nav {
  width: 166px;
  flex: none;
  display: flex;
  padding: 11px 0 0 36px;
  box-sizing: border-box;
  gap: 40px;
}

.sheet-nav svg {
  width: 8px;
  height: 24px;
}

.tabs {
  display: grid;
  grid-template-columns: 114px 6px 104px 134px 109px 92px 107px 87px 114px 64px 129px;
  flex: none;
}

.tab-active {
  height: 42px;
  background: #fff;
  border-radius: 0 0 8px 8px;
  color: #111;
  display: flex;
  flex-direction: column;
  align-items: center;
  box-sizing: border-box;
  padding-top: 6px;
}

.tab-active span {
  width: 89px;
  text-align: center;
  line-height: 29px;
  border-bottom: 3px solid #1e7145;
  white-space: nowrap;
}

.tab {
  height: 28px;
  margin-top: 10px;
  line-height: 28px;
  text-align: center;
  border-right: 1px solid #858585;
  white-space: nowrap;
}

.plus {
  width: 16px;
  height: 16px;
  flex: none;
  margin: 15px 0 0 64px;
}

.more-dots {
  width: 4px;
  align-items: center;
  height: 16px;
  margin: 16px 0 0 219px;
}

.hscroll {
  width: 676px;
  height: 26px;
  flex: none;
  margin: 10px 0 0 23px;
  box-sizing: border-box;
  padding: 0 7px;
  border-radius: 13px;
  background: #3e3e3e;
  display: flex;
  align-items: center;
  justify-content: space-between;
}

.hscroll svg {
  width: 9px;
  height: 14px;
  flex: none;
}

.hthumb {
  width: 592px;
  height: 12px;
  margin-right: 34px;
  border-radius: 6px;
  background: #c6c6c6;
}

/* status bar */
.status-bar {
  height: 33px;
  flex: none;
  display: flex;
  align-items: center;
  padding-left: 16px;
  font-size: 14.5px;
  color: #dcdcdc;
}

.ready {
  width: 70px;
  flex: none;
}

.a11y {
  width: 22px;
  height: 26px;
  flex: none;
}

.a11y-text {
  margin-left: 6px;
  font-weight: 700;
  font-size: 15.3px;
  color: #f0f0f0;
  white-space: nowrap;
}

.status-right {
  margin-left: auto;
  display: flex;
  align-items: center;
  height: 33px;
}

.view-btn {
  width: 60px;
  height: 36px;
  display: flex;
  align-items: center;
  justify-content: center;
}

.view-btn.active {
  background: #5f5f5f;
}

.view-btn svg {
  width: 20px;
  height: 24px;
}

.zoom-minus {
  width: 11px;
  height: 2px;
  margin-left: 6px;
  background: #d8d8d8;
}

.zoom-track {
  width: 148px;
  height: 3px;
  margin-left: 10px;
  background: #b4b4b4;
  display: flex;
  align-items: center;
  justify-content: center;
  flex: none;
}

.zoom-track i {
  width: 7px;
  height: 18px;
  margin-left: 6px;
  background: #bdbdbd;
}

.zoom-plus {
  margin-left: 6px;
  width: 16px;
  font-size: 20px;
  text-align: center;
}

.zoom-value {
  margin-left: 17px;
  margin-right: 11px;
  font-size: 16px;
}
</style>
